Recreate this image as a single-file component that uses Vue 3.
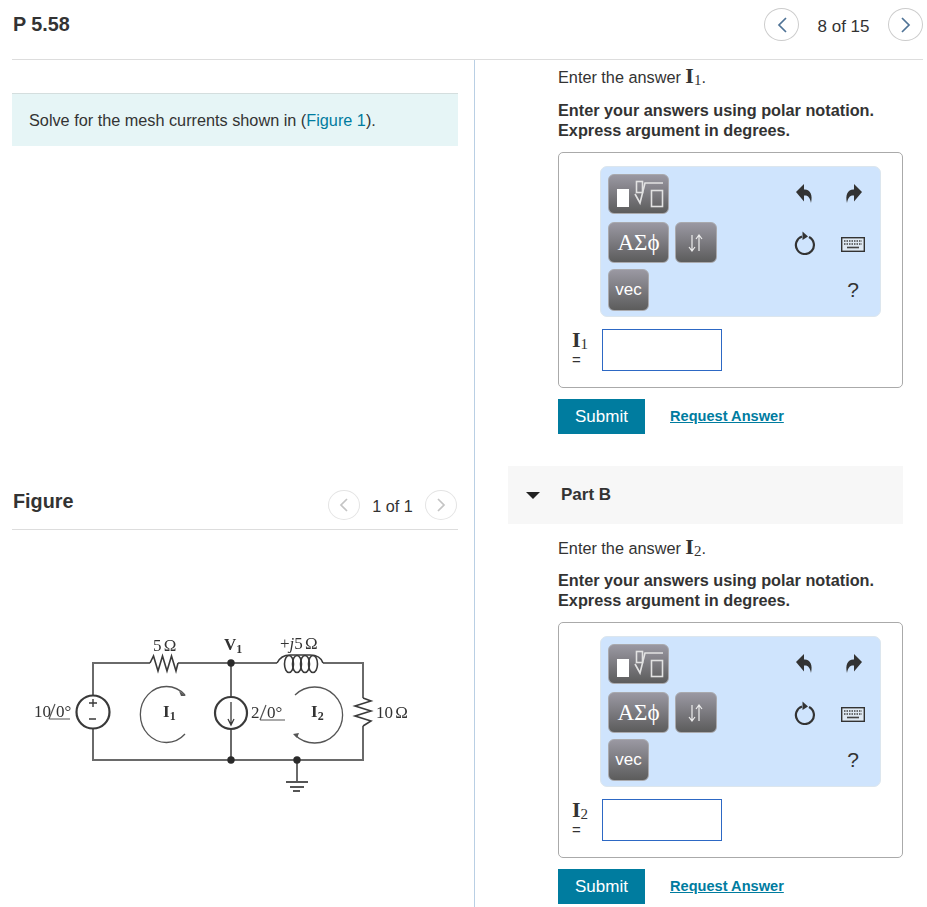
<script setup>
const parts = [
  { id: 'A', sub: '1', title: '' },
  { id: 'B', sub: '2', title: 'Part B' }
]
</script>

<template>
  <div class="page">
    <header class="top">
      <h1 class="title">P 5.58</h1>
      <nav class="pager">
        <button class="round">
          <svg width="12" height="18" viewBox="0 0 12 18"><path d="M10 2 3 9l7 7" /></svg>
        </button>
        <span class="count">8 of 15</span>
        <button class="round">
          <svg width="12" height="18" viewBox="0 0 12 18"><path d="m2 2 7 7-7 7" /></svg>
        </button>
      </nav>
    </header>

    <div class="main">
      <section class="left">
        <div class="intro">Solve for the mesh currents shown in (<a class="link">Figure 1</a>).</div>

        <div class="figure-head">
          <h2 class="figure-title">Figure</h2>
          <nav class="pager small">
            <button class="round off">
              <svg width="12" height="16" viewBox="0 0 12 16"><path d="M9 2 3 8l6 6" /></svg>
            </button>
            <span class="count">1 of 1</span>
            <button class="round off">
              <svg width="12" height="16" viewBox="0 0 12 16"><path d="m3 2 6 6-6 6" /></svg>
            </button>
          </nav>
        </div>

        <svg class="circuit" width="446" height="190" viewBox="12 620 446 190">
          <g fill="none" stroke="#6a6a6a" stroke-width="2">
            <path d="M93 695.500V663H150M178 663H277M323 663H363V698M363 726V760H93V729" />
            <path d="M231 663V697M231 729V760M297 760V782" />
          </g>
          <g fill="none" stroke="#3a3a3a" stroke-width="1.600">
            <path d="M150 663l3.500-7 4.500 15 4.500-15 4.500 15 4.500-15 4.500 15 2-8" />
            <path d="M277 663c3-6 8-8 13-8h20c6 0 11 2 13 8" />
            <ellipse cx="289" cy="664" rx="4.500" ry="8.500" />
            <ellipse cx="297" cy="664" rx="4.500" ry="8.500" />
            <ellipse cx="305" cy="664" rx="4.500" ry="8.500" />
            <ellipse cx="313" cy="664" rx="4.500" ry="8.500" />
            <path d="M363 698l8 3-16 5 16 5-16 5 16 5-8 5" />
            <circle cx="93" cy="712" r="16.500" stroke-width="2.200" />
            <circle cx="231" cy="713" r="16" stroke-width="2.200" />
            <path d="M231 702V724M228 719l3 6 3-6" stroke-width="1.300" />
            <path d="M185 695A26 28 0 1 0 185 734" stroke="#555" stroke-width="1.300" />
            <path d="M295 695A28 28 0 1 1 295 735" stroke="#555" stroke-width="1.300" />
            <path d="M286 782h22M290 787h14M293 791h7" stroke="#555" stroke-width="2" />
            <path d="M49 719 55 704M49 719H70M260 720 266 705M260 720H285" stroke="#555" stroke-width="1.200" />
            <path d="M89 703h8M93 699v8M89 719h7" stroke-width="1.400" />
          </g>
          <path d="M186 696l-7-5 2 5zM293 734l6-1-2 5z" fill="#555" />
          <g fill="#2a2a2a">
            <circle cx="231" cy="663" r="3.700" />
            <circle cx="231" cy="760" r="3.700" />
            <circle cx="297" cy="760" r="3.700" />
          </g>
          <g class="cir-text">
            <text x="153" y="651" word-spacing="-2">5 Ω</text>
            <text x="280" y="649" word-spacing="-2">+<tspan font-style="italic">j</tspan>5 Ω</text>
            <text x="376" y="718" word-spacing="-2">10 Ω</text>
            <text x="34" y="717">10</text>
            <text x="56" y="717">0°</text>
            <text x="251" y="718">2</text>
            <text x="267" y="718">0°</text>
            <text x="224" y="650" font-weight="bold">V<tspan font-size="12" dy="3">1</tspan></text>
            <text x="163" y="717" font-weight="bold">I<tspan font-size="12" dy="3">1</tspan></text>
            <text x="311" y="717" font-weight="bold">I<tspan font-size="12" dy="3">2</tspan></text>
          </g>
        </svg>
      </section>

      <section class="right">
        <article v-for="part in parts" :key="part.id" class="part">
          <div v-if="part.title" class="part-head">
            <span class="caret"></span>
            <h3 class="part-title">{{ part.title }}</h3>
          </div>
          <div class="part-body">
            <p class="ask">Enter the answer <span class="math">I<sub>{{ part.sub }}</sub></span>.</p>
            <p class="note">Enter your answers using polar notation.<br>Express argument in degrees.</p>

            <div class="answer">
              <div class="toolbar">
                <button class="tool wide">
                  <svg width="61" height="40" viewBox="0 0 61 40">
                    <rect x="9" y="15" width="12" height="18" fill="#fff" />
                    <g fill="none" stroke="#e2e2e2" stroke-width="1.600">
                      <rect x="28.500" y="7.500" width="6" height="11" />
                      <path d="M27 20l5 9 5-20H55" />
                      <rect x="43.500" y="16.500" width="11" height="16" />
                    </g>
                  </svg>
                </button>
                <button class="tool greek">ΑΣϕ</button>
                <span class="icon-cell c-a r-1">
                  <svg class="arrow" width="20" height="20" viewBox="0 0 20 20"><path d="M1 8 9 0v5.500c6-.5 9 5 7 13.500-1-5.500-3-8-7-7.500v6z" /></svg>
                </span>
                <span class="icon-cell c-b r-1">
                  <svg class="arrow" width="20" height="20" viewBox="0 0 20 20"><path d="M19 8 11 0v5.500c-6-.5-9 5-7 13.500 1-5.500 3-8 7-7.500v6z" /></svg>
                </span>
                <button class="tool arrows">
                  <svg width="18" height="20" viewBox="0 0 18 20" fill="none" stroke="#eee" stroke-width="1.200">
                    <path d="M5 2V18M2 14l3 4 3-4M12 18V2M9 6l3-4 3 4" />
                  </svg>
                </button>
                <span class="icon-cell c-a r-2">
                  <svg width="22" height="24" viewBox="0 0 22 24" fill="none">
                    <path d="M8 5.500A9 9 0 1 0 15 6" stroke="#333" stroke-width="2.200" />
                    <path d="M8.500 0.500 14 5.500 8.500 9z" fill="#333" />
                  </svg>
                </span>
                <span class="icon-cell c-b r-2 keys">
                  <svg width="24" height="15" viewBox="0 0 24 15">
                    <rect x=".7" y=".7" width="22.600" height="13.600" fill="#dfe9f3" stroke="#333" stroke-width="1.400" />
                    <path d="M3 4h18M3 7h18" stroke="#444" stroke-width="1.600" stroke-dasharray="1.500 1" fill="none" />
                    <path d="M6 10.500h12" stroke="#444" stroke-width="1.600" fill="none" />
                  </svg>
                </span>
                <button class="tool vec">vec</button>
                <span class="icon-cell c-b r-3 help">?</span>
              </div>

              <div class="entry">
                <div class="label">
                  <span class="math">I<sub>{{ part.sub }}</sub></span>
                  <span class="eq">=</span>
                </div>
                <input class="field" type="text" />
              </div>
            </div>

            <div class="actions">
              <button class="submit">Submit</button>
              <a class="request">Request Answer</a>
            </div>
          </div>
        </article>
      </section>
    </div>
  </div>
</template>

<style>
html,
body {
  margin: 0;
  background: #fff;
  overflow: hidden;
}
</style>

<style scoped>
.page {
  height: 907px;
  overflow: hidden;
  font-family: "Liberation Sans", Arial, sans-serif;
  color: #333;
  font-size: 16.250px;
}

h1, h2, h3, p {
  margin: 0;
}

.top {
  display: flex;
  justify-content: space-between;
  align-items: flex-start;
  height: 59px;
  margin: 0 4px 0 12px;
  border-bottom: 1px solid #ddd;
}

.title {
  font-size: 19.800px;
  line-height: 24px;
  margin: 12px 0 0 1px;
}

.pager {
  display: flex;
  align-items: center;
  margin-top: 8px;
}

.count {
  width: 89px;
  padding-top: 4px;
  text-align: center;
  font-size: 17px;
}

.round {
  width: 35px;
  height: 33px;
  padding: 0;
  border: 1px solid #ccc;
  border-radius: 50%;
  background: #fff;
  display: flex;
  align-items: center;
  justify-content: center;
}

.round path {
  fill: none;
  stroke: #4f7396;
  stroke-width: 1.700;
}

.round.off {
  width: 32px;
  height: 30px;
  border-color: #e4e4e4;
}

.round.off path {
  stroke: #c4c4c4;
}

.pager.small {
  margin: 7px 1px 0 0;
}

.pager.small .count {
  width: 65px;
  padding-top: 2px;
  font-size: 16.200px;
}

.main {
  display: flex;
}

.left {
  width: 446px;
  height: 847px;
  padding-right: 16px;
  border-right: 1px solid #b9cfe4;
  margin-left: 12px;
}

.intro {
  margin-top: 33px;
  height: 53px;
  box-sizing: border-box;
  border-top: 1px solid #d4dede;
  background: #e6f5f6;
  padding-left: 17px;
  line-height: 52px;
}

.link {
  color: #007c9f;
}

.figure-head {
  display: flex;
  justify-content: space-between;
  align-items: flex-start;
  margin-top: 337px;
  height: 46px;
  border-bottom: 1px solid #ddd;
}

.figure-title {
  font-size: 19.800px;
  line-height: 24px;
  margin: 6px 0 0 1px;
}

.circuit {
  display: block;
  margin-top: 90px;
  filter: blur(0.4px);
}

.cir-text {
  font-family: "Liberation Serif", serif;
  font-size: 17px;
  fill: #333;
}

.right {
  width: 395px;
  margin-left: 33px;
}

.part-head {
  display: flex;
  align-items: center;
  height: 58px;
  margin-top: 32px;
  background: #f7f7f7;
}

.caret {
  width: 0;
  height: 0;
  margin: 0 21px 0 18px;
  border-left: 7px solid transparent;
  border-right: 7px solid transparent;
  border-top: 7px solid #222;
}

.part-title {
  font-size: 17px;
}

.part-body {
  padding: 7px 0 0 50px;
}

.part-head + .part-body {
  padding-top: 14px;
}

.ask {
  height: 20px;
  line-height: 20px;
  margin-bottom: 13px;
}

.part-head + .part-body .ask {
  margin-bottom: 12px;
}

.math {
  font-family: "Liberation Serif", serif;
  font-weight: bold;
  font-size: 22px;
  line-height: 0;
}

.math sub {
  font-size: 15px;
  font-weight: normal;
  line-height: 0;
  vertical-align: -2px;
}

.note {
  font-weight: bold;
  line-height: 20px;
  margin-bottom: 12px;
}

.answer {
  box-sizing: border-box;
  height: 236px;
  border: 1px solid #aaa;
  border-radius: 5px;
  padding: 13px 21px 0 13px;
}

.toolbar {
  box-sizing: border-box;
  margin-left: 28px;
  height: 151px;
  padding: 7px 6px 0 7px;
  border: 1px solid #dce6ee;
  border-radius: 7px;
  background: #cfe4fd;
  display: grid;
  grid-template-columns: 61px 42px 1fr 42px 42px;
  grid-template-rows: 40px 49px 48px;
  column-gap: 6px;
}

.tool {
  padding: 0;
  border: 1px solid #a9a9ad;
  border-radius: 6px;
  background: linear-gradient(#9a98a2, #5c5c5c);
  color: #fff;
  display: flex;
  align-items: center;
  justify-content: center;
}

.wide {
  grid-column: 1;
  grid-row: 1;
}

.wide svg {
  margin: -1px;
}

.greek {
  grid-column: 1;
  grid-row: 2;
  margin-top: 8px;
  font-family: "Liberation Serif", serif;
  font-size: 23px;
}

.arrows {
  grid-column: 2;
  grid-row: 2;
  margin-top: 8px;
}

.vec {
  grid-column: 1;
  grid-row: 3;
  margin-top: 6px;
  width: 41px;
  font-family: "Liberation Sans", sans-serif;
  font-size: 17px;
}

.icon-cell {
  display: flex;
  align-items: center;
  justify-content: center;
}

.arrow path {
  fill: #333;
}

.c-a { grid-column: 4; }
.c-b { grid-column: 5; }
.r-1 { grid-row: 1; }
.r-2 { grid-row: 2; padding-top: 8px; }
.r-3 { grid-row: 3; padding-top: 6px; }

.keys svg {
  margin-top: 4px;
}

.help {
  font-size: 21px;
}

.entry {
  display: flex;
  align-items: center;
  margin-top: 12px;
}

.label {
  display: flex;
  flex-direction: column;
  width: 30px;
  line-height: 20px;
}

.label .math {
  line-height: 20px;
}

.eq {
  font-size: 15px;
  line-height: 20px;
}

.field {
  box-sizing: border-box;
  width: 120px;
  height: 42px;
  border: 1px solid #2d68c4;
  background: #fff;
  padding: 0;
  outline: none;
}

.actions {
  display: flex;
  align-items: center;
  margin-top: 11px;
}

.submit {
  width: 87px;
  height: 35px;
  padding: 0;
  border: none;
  background: #007c9f;
  color: #fff;
  font-family: "Liberation Sans", sans-serif;
  font-size: 17px;
}

.request {
  margin: -2px 0 0 25px;
  color: #007c9f;
  font-weight: bold;
  font-size: 14.600px;
  text-decoration: underline;
}
</style>
